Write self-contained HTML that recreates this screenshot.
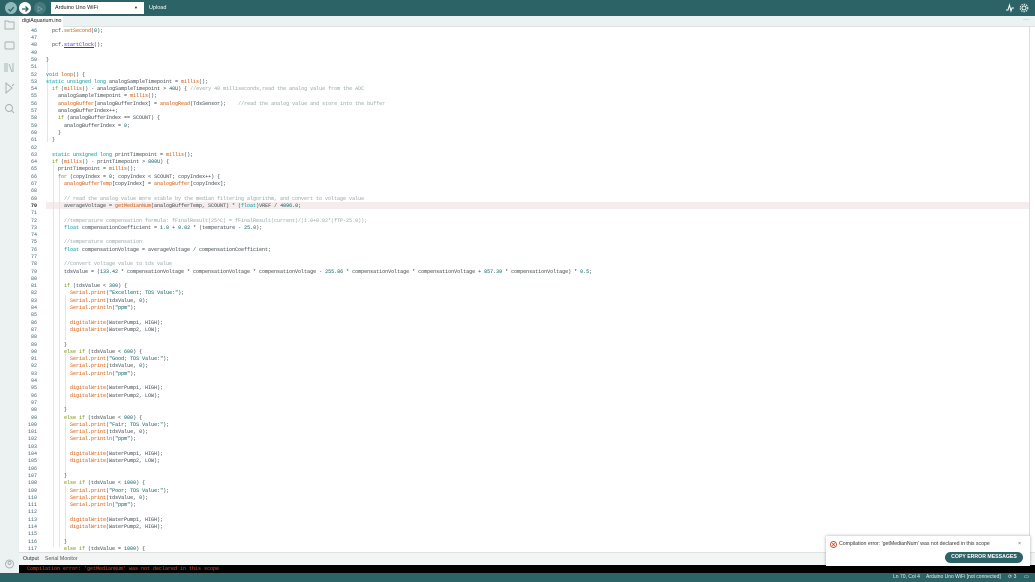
<!DOCTYPE html>
<html><head><meta charset="utf-8"><style>
*{margin:0;padding:0;box-sizing:border-box}
body{width:1035px;height:582px;overflow:hidden;background:#fff;font-family:"Liberation Sans",sans-serif;position:relative}
.top{position:absolute;left:0;top:0;width:1035px;height:16px;background:#2c6366}
.btn{position:absolute;top:2px;width:12px;height:12px;border-radius:50%}
.board{position:absolute;left:51px;top:2px;width:93px;height:12px;background:#fff;font-size:5.5px;line-height:12px;padding-left:4px;color:#222}
.tabbar{position:absolute;left:19px;top:16px;width:1016px;height:11px;background:#ecf1f1;border-bottom:1px solid #dde3e3}
.tab{position:absolute;left:0;top:0;width:44px;height:11px;background:#fff;font-size:5.3px;line-height:11px;padding-left:3px;color:#222}
.side{position:absolute;left:0;top:16px;width:19px;height:557px;background:#ecf1f1}
pre{position:absolute;top:27.8px;font-family:"Liberation Mono",monospace;font-size:5px;line-height:7.3px;white-space:pre}
.nums{left:19px;width:18px;text-align:right;color:#3f5f6a}
.code{left:46px;color:#3a4449}
.k{color:#728e00}.t{color:#00979d}.f{color:#d35400}.c{color:#95a5a6}.n{color:#005c5f}.s{color:#005c5f}
.hl{position:absolute;left:46px;top:201.6px;width:984px;height:7.3px;background:#f5eded}
.out{position:absolute;left:19px;top:552px;width:1016px;height:13px;background:#f3f5f5;border-top:1px solid #dde3e3;font-size:5.3px;line-height:13px;color:#333}
.con{position:absolute;left:19px;top:565px;width:1016px;height:8px;background:#000;font-family:"Liberation Mono",monospace;font-size:5px;line-height:8px;color:#d64a24;padding-left:8px}
.status{position:absolute;left:0;top:573px;width:1035px;height:9px;background:#2c6366;font-size:5px;line-height:9px;color:#e8f0f0}
.note{position:absolute;left:826px;top:536px;width:204px;height:30px;background:#fff;box-shadow:0 0 3px rgba(0,0,0,.35);font-size:5.2px;color:#333}
.cbtn{position:absolute;left:119px;top:16px;width:78px;height:11px;border-radius:6px;background:#2c6366;color:#fff;font-weight:bold;font-size:5.2px;line-height:11px;text-align:center}
.guide{position:absolute;width:1px;background:#e3e6e6}
</style></head><body>
<div class="top">
 <div class="btn" style="left:5px;background:#8fb9bb"><svg width="12" height="12"><path d="M3.5 6.2 5.3 8 8.7 4.2" stroke="#2c6366" stroke-width="1.3" fill="none"/></svg></div>
 <div class="btn" style="left:19px;background:#fff"><svg width="12" height="12"><path d="M3 6h6M6.5 3.5 9 6 6.5 8.5" stroke="#2c6366" stroke-width="1.3" fill="none"/></svg></div>
 <div class="btn" style="left:34px;background:#477a7d"><svg width="12" height="12"><path d="M4 3.5v5l4-2.5z" stroke="#7fa5a7" stroke-width="0.8" fill="none"/></svg></div>
 <div class="board">Arduino Uno WiFi<span style="position:absolute;right:6px;font-size:4px">▼</span></div>
 <div style="position:absolute;left:149px;top:0;font-size:5.5px;line-height:16px;color:#fff">Upload</div>
 <svg style="position:absolute;left:1005px;top:3px" width="10" height="10"><path d="M1 7 3 7 4.5 2 6 8 7 5 9 5" stroke="#fff" stroke-width="1" fill="none"/></svg>
 <svg style="position:absolute;left:1019px;top:3px" width="10" height="10"><circle cx="5" cy="5" r="2" stroke="#fff" fill="none"/><circle cx="5" cy="5" r="3.8" stroke="#fff" stroke-dasharray="1.5 1" fill="none"/></svg>
</div>
<div class="side">
 <svg width="19" height="557" fill="none" stroke="#a3b0b0" stroke-width="0.9">
  <path d="M5 5h3l1 1h5v7H5z"/>
  <rect x="5" y="26" width="9" height="7" rx="1"/>
  <path d="M5 47v9M7 47v9M9 48l3 8M13 47v9"/>
  <path d="M6 67v10l6-5zM12 70l2-2"/>
  <circle cx="9" cy="92" r="3.5"/><path d="M11.5 94.5 14 97"/>
  <circle cx="9.5" cy="548" r="4"/><circle cx="9.5" cy="547" r="1.5"/>
 </svg>
</div>
<div class="tabbar"><div class="tab">digiAquarium.ino</div><span style="position:absolute;right:6px;top:0;font-size:6px;line-height:9px;color:#778">···</span></div>
<div class="hl"></div>
<div class="guide" style="left:47px;top:62px;height:80px"></div>
<div class="guide" style="left:53px;top:164px;height:383px"></div>
<div class="guide" style="left:59px;top:178px;height:369px"></div>
<div class="guide" style="left:65px;top:295px;height:45px"></div>
<div class="guide" style="left:65px;top:353px;height:55px"></div>
<div class="guide" style="left:65px;top:420px;height:55px"></div>
<div class="guide" style="left:65px;top:486px;height:55px"></div>
<div style="position:absolute;left:1029px;top:27px;width:1px;height:525px;background:#ddd"></div>
<pre class="nums">46
47
48
49
50
51
52
53
54
55
56
57
58
59
60
61
62
63
64
65
66
67
68
69
<b style="color:#222">70</b>
71
72
73
74
75
76
77
78
79
80
81
82
83
84
85
86
87
88
89
90
91
92
93
94
95
96
97
98
99
100
101
102
103
104
105
106
107
108
109
110
111
112
113
114
115
116
117</pre>
<pre class="code">  pcf.<span class="f">setSecond</span>(<span class="n">0</span>);

  pcf.<span class="f" style="text-decoration:underline;color:#4b2fc9">startClock</span>();

}

<span class="t">void</span> <span class="f">loop</span>() {
<span class="t">static unsigned long</span> analogSampleTimepoint = <span class="f">millis</span>();
  <span class="k">if</span> (<span class="f">millis</span>() - analogSampleTimepoint &gt; <span class="n">40U</span>) { <span class="c">//every 40 milliseconds,read the analog value from the ADC</span>
    analogSampleTimepoint = <span class="f">millis</span>();
    <span class="f">analogBuffer</span>[analogBufferIndex] = <span class="f">analogRead</span>(TdsSensor);    <span class="c">//read the analog value and store into the buffer</span>
    analogBufferIndex++;
    <span class="k">if</span> (analogBufferIndex == SCOUNT) {
      analogBufferIndex = <span class="n">0</span>;
    }
  }

  <span class="t">static unsigned long</span> printTimepoint = <span class="f">millis</span>();
  <span class="k">if</span> (<span class="f">millis</span>() - printTimepoint &gt; <span class="n">800U</span>) {
    printTimepoint = <span class="f">millis</span>();
    <span class="k">for</span> (copyIndex = <span class="n">0</span>; copyIndex &lt; SCOUNT; copyIndex++) {
      <span class="f">analogBufferTemp</span>[copyIndex] = <span class="f">analogBuffer</span>[copyIndex];

      <span class="c">// read the analog value more stable by the median filtering algorithm, and convert to voltage value</span>
      averageVoltage = <span class="f">getMedianNum</span>(analogBufferTemp, SCOUNT) * (<span class="t">float</span>)VREF / <span class="n">4096.0</span>;

      <span class="c">//temperature compensation formula: fFinalResult(25^C) = fFinalResult(current)/(1.0+0.02*(fTP-25.0));</span>
      <span class="t">float</span> compensationCoefficient = <span class="n">1.0</span> + <span class="n">0.02</span> * (temperature - <span class="n">25.0</span>);

      <span class="c">//temperature compensation</span>
      <span class="t">float</span> compensationVoltage = averageVoltage / compensationCoefficient;

      <span class="c">//convert voltage value to tds value</span>
      tdsValue = (<span class="n">133.42</span> * compensationVoltage * compensationVoltage * compensationVoltage - <span class="n">255.86</span> * compensationVoltage * compensationVoltage + <span class="n">857.39</span> * compensationVoltage) * <span class="n">0.5</span>;

      <span class="k">if</span> (tdsValue &lt; <span class="n">300</span>) {
        <span class="f">Serial</span>.<span class="f">print</span>(<span class="s">"Excellent; TDS Value:"</span>);
        <span class="f">Serial</span>.<span class="f">print</span>(tdsValue, <span class="n">0</span>);
        <span class="f">Serial</span>.<span class="f">println</span>(<span class="s">"ppm"</span>);

        <span class="f">digitalWrite</span>(WaterPump1, HIGH);
        <span class="f">digitalWrite</span>(WaterPump2, LOW);

      }
      <span class="k">else if</span> (tdsValue &lt; <span class="n">600</span>) {
        <span class="f">Serial</span>.<span class="f">print</span>(<span class="s">"Good; TDS Value:"</span>);
        <span class="f">Serial</span>.<span class="f">print</span>(tdsValue, <span class="n">0</span>);
        <span class="f">Serial</span>.<span class="f">println</span>(<span class="s">"ppm"</span>);

        <span class="f">digitalWrite</span>(WaterPump1, HIGH);
        <span class="f">digitalWrite</span>(WaterPump2, LOW);

      }
      <span class="k">else if</span> (tdsValue &lt; <span class="n">900</span>) {
        <span class="f">Serial</span>.<span class="f">print</span>(<span class="s">"Fair; TDS Value:"</span>);
        <span class="f">Serial</span>.<span class="f">print</span>(tdsValue, <span class="n">0</span>);
        <span class="f">Serial</span>.<span class="f">println</span>(<span class="s">"ppm"</span>);

        <span class="f">digitalWrite</span>(WaterPump1, HIGH);
        <span class="f">digitalWrite</span>(WaterPump2, LOW);

      }
      <span class="k">else if</span> (tdsValue &lt; <span class="n">1000</span>) {
        <span class="f">Serial</span>.<span class="f">print</span>(<span class="s">"Poor; TDS Value:"</span>);
        <span class="f">Serial</span>.<span class="f">print</span>(tdsValue, <span class="n">0</span>);
        <span class="f">Serial</span>.<span class="f">println</span>(<span class="s">"ppm"</span>);

        <span class="f">digitalWrite</span>(WaterPump1, HIGH);
        <span class="f">digitalWrite</span>(WaterPump2, HIGH);

      }
      <span class="k">else if</span> (tdsValue = <span class="n">1000</span>) {</pre>
<div class="out"><span style="margin-left:4px">Output</span><span style="margin-left:6px;color:#555">Serial Monitor</span></div>
<div class="con">Compilation error: 'getMedianNum' was not declared in this scope</div>
<div class="status"><span style="position:absolute;left:893px">Ln 70, Col 4</span><span style="position:absolute;left:926px">Arduino Uno WiFi [not connected]</span><span style="position:absolute;left:1008px">⟳ 3</span><span style="position:absolute;left:1024px">▭</span></div>
<div class="note">
 <svg style="position:absolute;left:4px;top:5px" width="7" height="7"><circle cx="3.5" cy="3.5" r="3" stroke="#d64a24" fill="none" stroke-width="0.9"/><path d="M2.2 2.2 4.8 4.8M4.8 2.2 2.2 4.8" stroke="#d64a24" stroke-width="0.8"/></svg>
 <span style="position:absolute;left:13px;top:4px;line-height:9px">Compilation error: 'getMedianNum' was not declared in this scope</span>
 <span style="position:absolute;left:192px;top:4px;line-height:9px;color:#555">×</span>
 <div class="cbtn">COPY ERROR MESSAGES</div>
</div>
</body></html>
